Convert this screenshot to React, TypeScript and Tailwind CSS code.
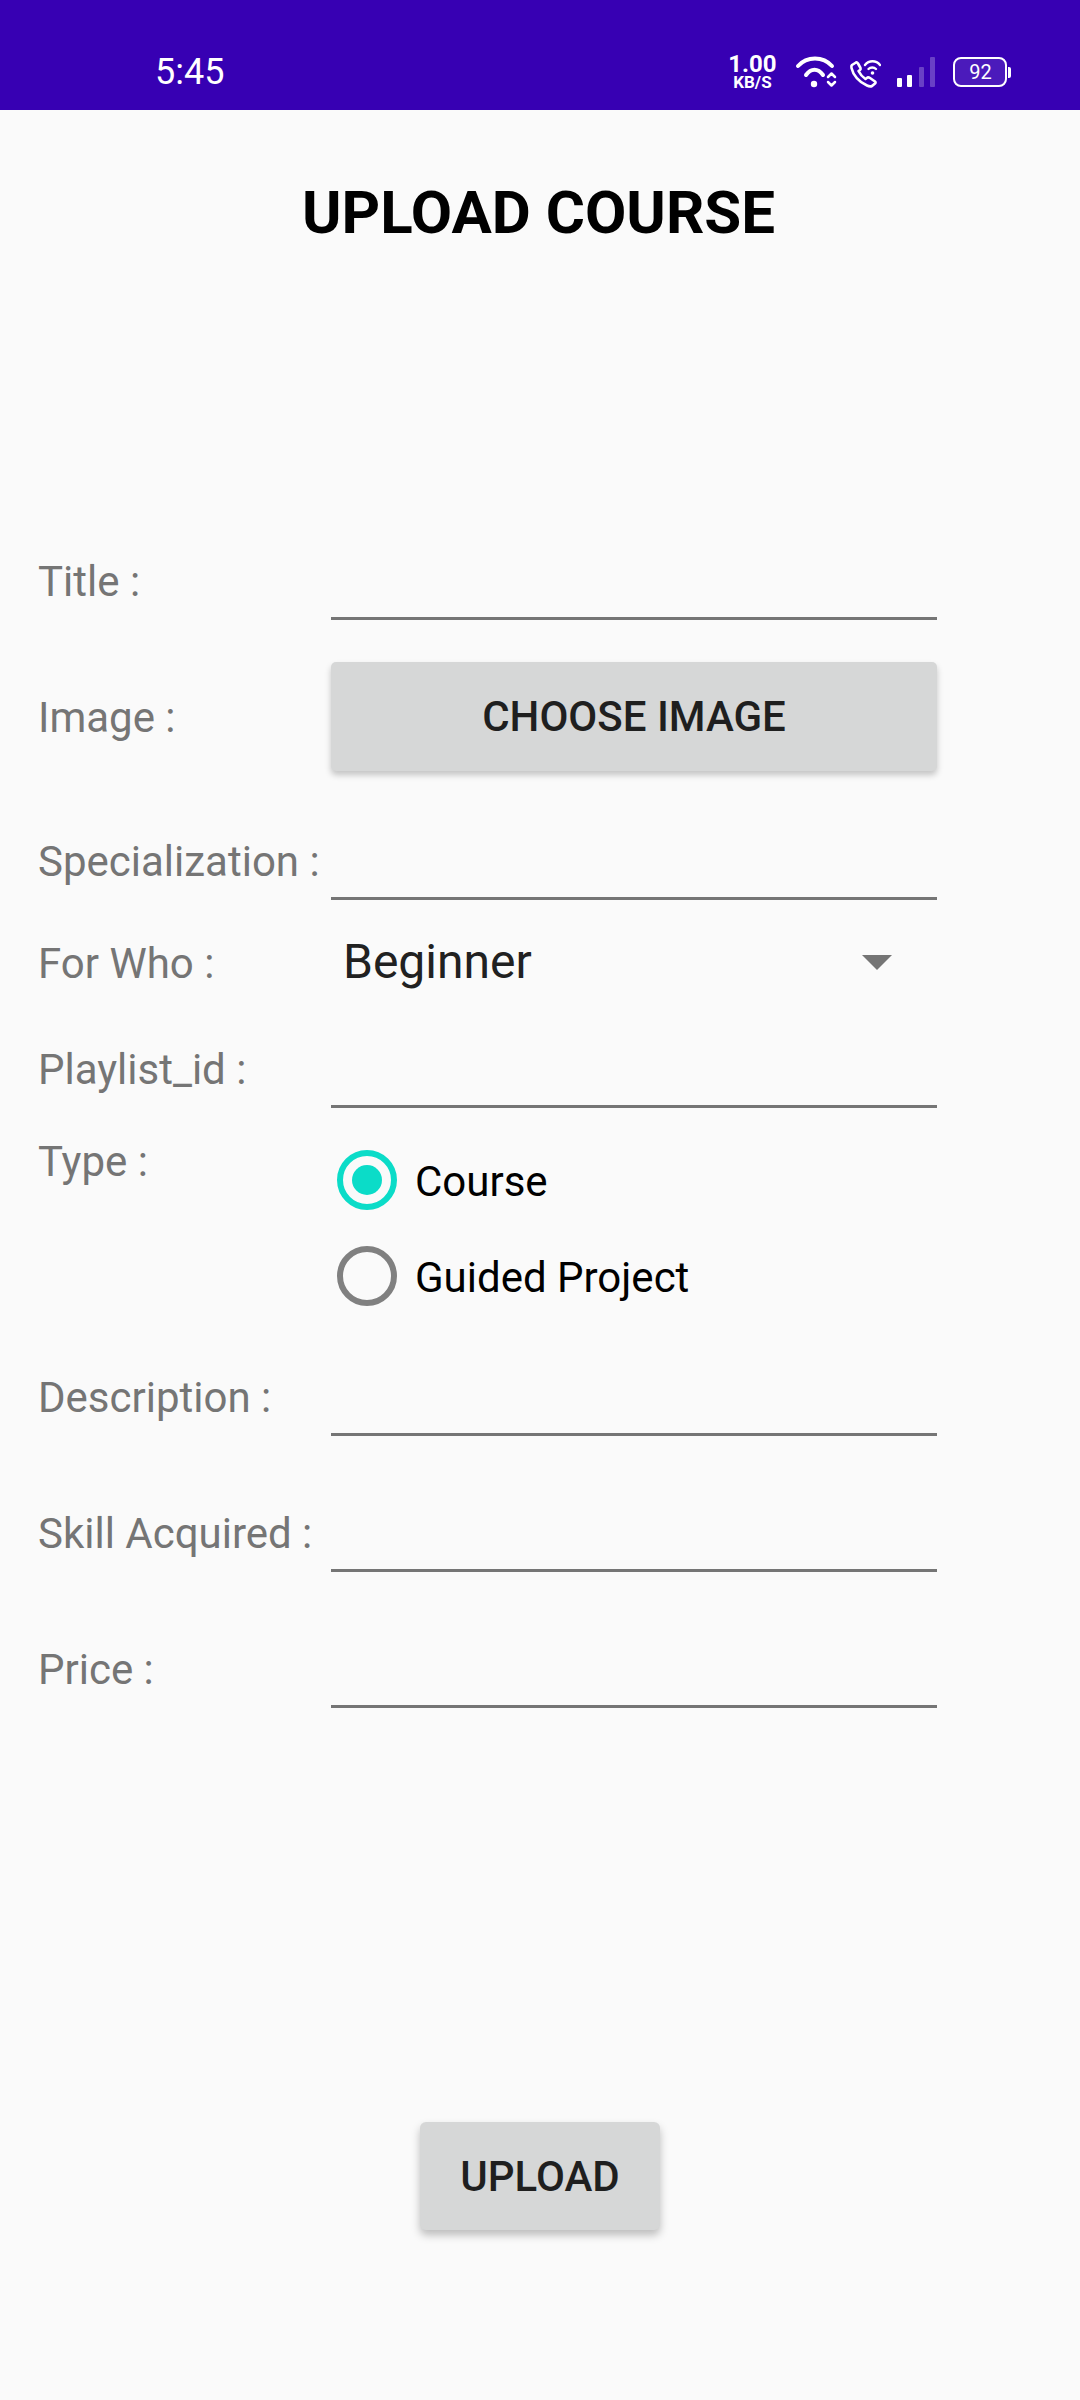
const labelClass = "w-[331px] shrink-0 pl-[38px] text-[42px] leading-[49px] text-[#757575]";

function WifiIcon() {
  return (
    <svg width="45" height="34" viewBox="0 0 45 34" fill="none" stroke="white" strokeLinecap="round" className="ml-[19px]">
      <path d="M3 11 C12 1 28 1 37 11" strokeWidth="4" />
      <path d="M11 20 C16 13 23 13 28 20" strokeWidth="4" />
      <circle cx="19" cy="29" r="3.2" fill="white" stroke="none" />
      <path d="M33 22 L36.5 18.5 L40 22" strokeWidth="2.5" strokeLinejoin="round" />
      <path d="M33 27 L36.5 30.5 L40 27" strokeWidth="2.5" strokeLinejoin="round" />
    </svg>
  );
}

function PhoneIcon() {
  return (
    <svg width="34" height="34" viewBox="0 0 34 34" fill="none" stroke="white" strokeLinecap="round" strokeLinejoin="round" className="ml-[7px]">
      <path
        d="M5 10 L9 7.5 Q10 7 11 8.5 L13.5 13 Q14 14 13 15 L11.5 16 Q14 21 18.5 24 L20.5 22.5 Q21.5 22 23 23 L28 26.5 Q29 27.5 28 28.5 L25 31 Q23 32 20 30.5 C12 27 6 20 4.5 13 Q4 11 5 10 Z"
        strokeWidth="2.6"
      />
      <path d="M18 10 C22 5 29 5 33 10" strokeWidth="2.4" />
      <path d="M21.5 14 C23.5 12 27 12 29 14" strokeWidth="2.4" />
      <circle cx="25.5" cy="18" r="1.8" fill="white" stroke="none" />
    </svg>
  );
}

function SignalIcon() {
  return (
    <svg width="40" height="32" viewBox="0 0 40 32" fill="white" className="ml-[15px]">
      <rect x="1" y="22" width="5" height="9" rx="1" />
      <rect x="11" y="19" width="5" height="12" rx="1" />
      <rect x="23" y="11" width="5" height="20" rx="1" opacity="0.25" />
      <rect x="34" y="1" width="5" height="30" rx="1" opacity="0.25" />
    </svg>
  );
}

function Battery() {
  return (
    <div className="ml-[17px] flex items-center">
      <div className="flex h-[30px] w-[54px] items-center justify-center rounded-[8px] border-2 border-white bg-white/10 text-[20px] leading-none text-white">
        92
      </div>
      <div className="ml-[1px] h-[11px] w-[3px] rounded-r-[2px] bg-white" />
    </div>
  );
}

function StatusBar() {
  return (
    <div className="flex h-[110px] items-center bg-[#3700b3] pl-[155px] pt-[34px] text-white">
      <span className="text-[36px] leading-none">5:45</span>
      <div className="ml-[504px] flex w-[48px] flex-col items-center font-bold leading-none">
        <span className="text-[24px] leading-[21px]">1.00</span>
        <span className="text-[17px] leading-[15px]">KB/S</span>
      </div>
      <WifiIcon />
      <PhoneIcon />
      <SignalIcon />
      <Battery />
    </div>
  );
}

function InputRow({ label }: { label: string }) {
  return (
    <div className="flex h-[77px] items-center">
      <span className={labelClass}>{label}</span>
      <div className="h-[77px] w-[606px] border-b-[3px] border-[#757575]" />
    </div>
  );
}

function RadioRow({ label, checked }: { label: string; checked?: boolean }) {
  return (
    <div className="flex h-[96px] items-center pl-[6px]">
      <div
        className={
          checked
            ? "flex h-[60px] w-[60px] items-center justify-center rounded-full border-[6px] border-[#0bdcc8]"
            : "h-[60px] w-[60px] rounded-full border-[6px] border-[#808080]"
        }
      >
        {checked && <div className="h-[30px] w-[30px] rounded-full bg-[#0bdcc8]" />}
      </div>
      <span className="ml-[18px] pt-[2px] text-[42px] leading-[49px] text-black">{label}</span>
    </div>
  );
}

export default function App() {
  return (
    <div className="flex h-[2400px] w-[1080px] flex-col overflow-hidden bg-[#fafafa] font-['Roboto',sans-serif]">
      <StatusBar />

      <h1 className="mt-[68px] h-[365px] pr-[3px] text-center text-[60px] font-bold leading-[70px] text-black">
        UPLOAD COURSE
      </h1>

      <InputRow label="Title :" />

      <div className="mt-[42px] flex h-[109px] items-center">
        <span className={`${labelClass} pt-[1px]`}>Image :</span>
        <button className="h-[109px] w-[606px] rounded-[5px] bg-[#d6d7d7] text-[42px] font-medium text-[#1f1f1f] shadow-[0_4px_6px_rgba(0,0,0,0.22)]">
          CHOOSE IMAGE
        </button>
      </div>

      <div className="mt-[52px]">
        <InputRow label="Specialization :" />
      </div>

      <div className="mt-[22px] flex h-[80px] items-center">
        <span className={`${labelClass} pt-[2px]`}>For Who :</span>
        <div className="flex w-[606px] items-center justify-between pl-[12px] pr-[45px]">
          <span className="text-[48px] leading-[56px] text-[#212121]">Beginner</span>
          <div className="h-0 w-0 border-x-[15px] border-t-[15px] border-x-transparent border-t-[#757575]" />
        </div>
      </div>

      <div className="mt-[29px]">
        <InputRow label="Playlist_id :" />
      </div>

      <div className="mt-[24px] flex">
        <span className={`${labelClass} py-[5px]`}>Type :</span>
        <div>
          <RadioRow label="Course" checked />
          <RadioRow label="Guided Project" />
        </div>
      </div>

      <div className="mt-[35px] flex flex-col gap-[59px]">
        <InputRow label="Description :" />
        <InputRow label="Skill Acquired :" />
        <InputRow label="Price :" />
      </div>

      <button className="mx-auto mt-[414px] h-[108px] w-[240px] rounded-[6px] bg-[#d6d7d7] text-[42px] font-medium text-[#1f1f1f] shadow-[0_5px_8px_rgba(0,0,0,0.25)]">
        UPLOAD
      </button>
    </div>
  );
}
